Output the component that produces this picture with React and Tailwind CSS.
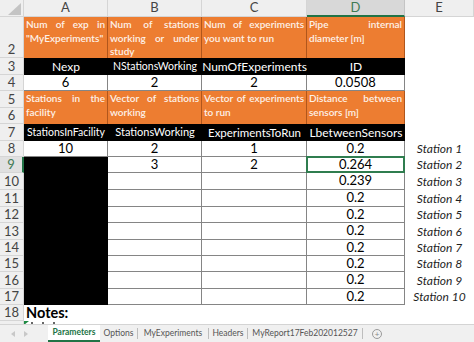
const colHead = 'flex items-center justify-center border-r border-b border-[#d5d5d5] bg-[#efefef] text-[13px] text-[#444]'
const rowHead = 'flex items-end justify-center border-r border-b border-[#d5d5d5] bg-[#efefef] text-[13px] leading-[16px] text-[#444]'
const orange = 'bg-[#ed7d31] border-r border-[#b0561c] px-[2px] pt-[1px] text-justify text-[10px] font-semibold leading-[13.5px] text-[#fdf1e8]'
const black = 'flex items-center justify-center bg-black text-white whitespace-nowrap'
const cell = 'flex items-center justify-center border-r border-b border-[#858585] text-[13px] text-black'
const station = 'flex items-center justify-center text-[12px] italic text-[#1f1f1f]'

const lengths = ['0.2', '0.264', '0.239', '0.2', '0.2', '0.2', '0.2', '0.2', '0.2', '0.2']
const working = ['2', '3']
const toRun = ['1', '2']

function Corner() {
  return (
    <div className="border-r border-b border-[#d5d5d5] bg-[#efefef]">
      <svg width="23" height="16" viewBox="0 0 23 16">
        <polygon points="21,3 21,15 8,15" fill="#c4c4c4" />
      </svg>
    </div>
  )
}

function TabBar() {
  return (
    <div className="flex h-[18px] items-stretch border-t border-[#d4d4d4] bg-[#f0f0f0] text-[8.5px] text-[#555]">
      <div className="flex w-[48px] items-center gap-[9px] pl-[11px]">
        <svg width="4" height="6" viewBox="0 0 4 6"><polygon points="4,0 4,6 0,3" fill="#c8c8c8" /></svg>
        <svg width="4" height="6" viewBox="0 0 4 6"><polygon points="0,0 0,6 4,3" fill="#c8c8c8" /></svg>
      </div>
      <div className="flex w-[52px] items-center justify-center border-b-2 border-[#217346] bg-white font-bold text-[#217346]">
        Parameters
      </div>
      <div className="flex w-[37px] items-center justify-center">Options</div>
      <span className="h-[11px] w-px self-center bg-[#bdbdbd]" />
      <div className="flex w-[70px] items-center justify-center">MyExperiments</div>
      <span className="h-[11px] w-px self-center bg-[#bdbdbd]" />
      <div className="flex w-[38px] items-center justify-center">Headers</div>
      <span className="h-[11px] w-px self-center bg-[#bdbdbd]" />
      <div className="flex w-[114px] items-center justify-center">MyReport17Feb202012527</div>
      <span className="h-[11px] w-px self-center bg-[#bdbdbd]" />
      <div className="flex items-center pl-[9px]">
        <span className="flex h-[10px] w-[10px] items-center justify-center rounded-full border border-[#9a9a9a] text-[8px] leading-none text-[#888]">
          +
        </span>
      </div>
    </div>
  )
}

export default function App() {
  return (
    <div className="flex h-[342px] w-[474px] flex-col overflow-hidden bg-white font-['Lato',sans-serif]">
      <div className="grid grid-cols-[24px_84px_94px_105px_98px_69px] grid-rows-[17px_41px_17px_16px_17px_16px_17px_16px_16px_17px_17px_16px_17px_16px_16px_17px_16px_16px_3px]">
        {/* column letters */}
        <Corner />
        <div className={colHead}>A</div>
        <div className={colHead}>B</div>
        <div className={colHead}>C</div>
        <div className="flex items-center justify-center border-r border-b-2 border-r-[#c4c4c4] border-b-[#217346] bg-[#d8d8d8] text-[13px] text-[#3f7a55]">D</div>
        <div className={colHead}>E</div>

        {/* row 2: descriptions */}
        <div className={rowHead}>2</div>
        <div className={orange}>Num of exp in "MyExperiments"</div>
        <div className={orange}>Num of stations working or under study</div>
        <div className={orange}>Num of experiments you want to run</div>
        <div className={orange}>Pipe internal diameter [m]</div>
        <div />

        {/* row 3: names */}
        <div className={rowHead}>3</div>
        <div className={`${black} text-[12px]`}>Nexp</div>
        <div className={`${black} text-[10.5px]`}>NStationsWorking</div>
        <div className={`${black} text-[12px]`}>NumOfExperiments</div>
        <div className={`${black} text-[12px]`}>ID</div>
        <div />

        {/* row 4: values */}
        <div className={rowHead}>4</div>
        <div className={cell}>6</div>
        <div className={cell}>2</div>
        <div className={cell}>2</div>
        <div className={cell}>0.0508</div>
        <div />

        {/* rows 5-6: merged descriptions */}
        <div className={rowHead}>5</div>
        <div className={`${orange} row-span-2`}>Stations in the facility</div>
        <div className={`${orange} row-span-2`}>Vector of stations working</div>
        <div className={`${orange} row-span-2`}>Vector of experiments to run</div>
        <div className={`${orange} row-span-2`}>Distance between sensors [m]</div>
        <div />
        <div className={rowHead}>6</div>
        <div />

        {/* row 7: names */}
        <div className={rowHead}>7</div>
        <div className={`${black} text-[10.5px]`}>StationsInFacility</div>
        <div className={`${black} text-[11px]`}>StationsWorking</div>
        <div className={`${black} text-[11.5px]`}>ExperimentsToRun</div>
        <div className={`${black} text-[12px]`}>LbetweenSensors</div>
        <div />

        {/* rows 8-17: stations */}
        {lengths.map((len, i) => {
          const row = i + 8
          const selected = row === 9
          return [
            <div
              key={`h${row}`}
              className={
                selected
                  ? 'flex items-end justify-center border-r-2 border-b border-r-[#217346] border-b-[#d5d5d5] bg-[#e0e0e0] text-[13px] leading-[16px] text-[#3f7a55]'
                  : rowHead
              }
            >
              {row}
            </div>,
            i === 0 ? (
              <div key={`a${row}`} className={cell}>10</div>
            ) : (
              <div key={`a${row}`} className="bg-black" />
            ),
            <div key={`b${row}`} className={cell}>{working[i] || ''}</div>,
            <div key={`c${row}`} className={cell}>{toRun[i] || ''}</div>,
            <div key={`d${row}`} className={`${cell} relative`}>
              {len}
              {selected && <span className="pointer-events-none absolute inset-[-1px] border-2 border-[#2f7d4f]" />}
            </div>,
            <div key={`e${row}`} className={station}>Station {i + 1}</div>,
          ]
        })}

        {/* row 18: notes */}
        <div className={rowHead}>18</div>
        <div className="flex items-center whitespace-nowrap pl-[2px] text-[14.5px] font-bold text-black">Notes:</div>
        <div />
        <div />
        <div />
        <div />

        {/* row 19, cut off by the tab bar */}
        <div className="border-r border-[#d5d5d5] bg-[#efefef]" />
        <div className="relative flex items-start gap-[9px] overflow-hidden pl-[7px]">
          <svg className="absolute left-0 top-0" width="5" height="4" viewBox="0 0 5 4">
            <polygon points="0,0 5,0 0,4" fill="#1e8a43" />
          </svg>
          <span className="mt-[1px] h-[2px] w-[2px] rounded-full bg-[#333]" />
          <span className="mt-[1px] h-[2px] w-[2px] rounded-full bg-[#333]" />
          <span className="mt-[1px] h-[2px] w-[2px] rounded-full bg-[#333]" />
        </div>
        <div />
        <div />
        <div />
        <div />
      </div>
      <TabBar />
    </div>
  )
}
